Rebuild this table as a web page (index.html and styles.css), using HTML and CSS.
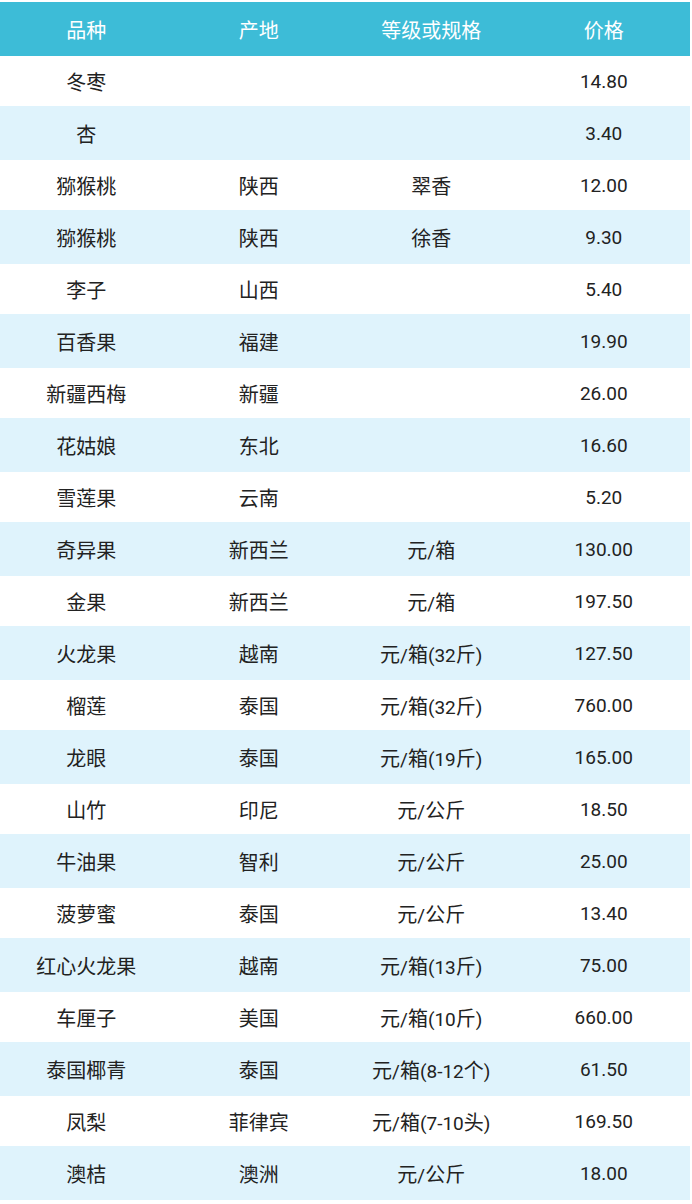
FILE: index.html
```html
<!DOCTYPE html>
<html lang="zh-CN">
<head>
<meta charset="utf-8">
<title>水果价格</title>
<link rel="stylesheet" href="styles.css">
</head>
<body>
<table class="price-table">
  <thead>
    <tr class="head-row"><th>品种</th><th>产地</th><th>等级或规格</th><th>价格</th></tr>
  </thead>
  <tbody>
    <tr><td>冬枣</td><td></td><td></td><td class="lat">14.80</td></tr>
    <tr><td>杏</td><td></td><td></td><td class="lat">3.40</td></tr>
    <tr><td>猕猴桃</td><td>陕西</td><td>翠香</td><td class="lat">12.00</td></tr>
    <tr><td>猕猴桃</td><td>陕西</td><td>徐香</td><td class="lat">9.30</td></tr>
    <tr><td>李子</td><td>山西</td><td></td><td class="lat">5.40</td></tr>
    <tr><td>百香果</td><td>福建</td><td></td><td class="lat">19.90</td></tr>
    <tr><td>新疆西梅</td><td>新疆</td><td></td><td class="lat">26.00</td></tr>
    <tr><td>花姑娘</td><td>东北</td><td></td><td class="lat">16.60</td></tr>
    <tr><td>雪莲果</td><td>云南</td><td></td><td class="lat">5.20</td></tr>
    <tr><td>奇异果</td><td>新西兰</td><td>元<span class="lat">/</span>箱</td><td class="lat">130.00</td></tr>
    <tr><td>金果</td><td>新西兰</td><td>元<span class="lat">/</span>箱</td><td class="lat">197.50</td></tr>
    <tr><td>火龙果</td><td>越南</td><td>元<span class="lat">/</span>箱<span class="lat">(32</span>斤<span class="lat">)</span></td><td class="lat">127.50</td></tr>
    <tr><td>榴莲</td><td>泰国</td><td>元<span class="lat">/</span>箱<span class="lat">(32</span>斤<span class="lat">)</span></td><td class="lat">760.00</td></tr>
    <tr><td>龙眼</td><td>泰国</td><td>元<span class="lat">/</span>箱<span class="lat">(19</span>斤<span class="lat">)</span></td><td class="lat">165.00</td></tr>
    <tr><td>山竹</td><td>印尼</td><td>元<span class="lat">/</span>公斤</td><td class="lat">18.50</td></tr>
    <tr><td>牛油果</td><td>智利</td><td>元<span class="lat">/</span>公斤</td><td class="lat">25.00</td></tr>
    <tr><td>菠萝蜜</td><td>泰国</td><td>元<span class="lat">/</span>公斤</td><td class="lat">13.40</td></tr>
    <tr><td>红心火龙果</td><td>越南</td><td>元<span class="lat">/</span>箱<span class="lat">(13</span>斤<span class="lat">)</span></td><td class="lat">75.00</td></tr>
    <tr><td>车厘子</td><td>美国</td><td>元<span class="lat">/</span>箱<span class="lat">(10</span>斤<span class="lat">)</span></td><td class="lat">660.00</td></tr>
    <tr><td>泰国椰青</td><td>泰国</td><td>元<span class="lat">/</span>箱<span class="lat">(8-12</span>个<span class="lat">)</span></td><td class="lat">61.50</td></tr>
    <tr><td>凤梨</td><td>菲律宾</td><td>元<span class="lat">/</span>箱<span class="lat">(7-10</span>头<span class="lat">)</span></td><td class="lat">169.50</td></tr>
    <tr><td>澳桔</td><td>澳洲</td><td>元<span class="lat">/</span>公斤</td><td class="lat">18.00</td></tr>
  </tbody>
</table>
</body>
</html>
```
FILE: styles.css
```css
html, body {
  margin: 0;
  padding: 0;
  background: #ffffff;
}
body {
  padding-top: 2px;
  font-family: "Noto Sans CJK SC", "Noto Sans", sans-serif;
  font-size: 20px;
  color: #222222;
}
.price-table {
  width: 690px;
  border-collapse: collapse;
  table-layout: fixed;
}
.price-table th,
.price-table td {
  padding: 0;
  text-align: center;
  vertical-align: middle;
  font-weight: normal;
  white-space: nowrap;
}
.head-row {
  background: #3dbcd7;
  height: 54px;
}
.head-row th {
  color: #ffffff;
}
.price-table tbody tr {
  height: 50px;
}
.price-table tbody tr:nth-child(even) {
  height: 54px;
  background: #dff3fc;
}
.lat {
  font-family: "Roboto", "Liberation Sans", sans-serif;
  font-size: 19px;
}
```
